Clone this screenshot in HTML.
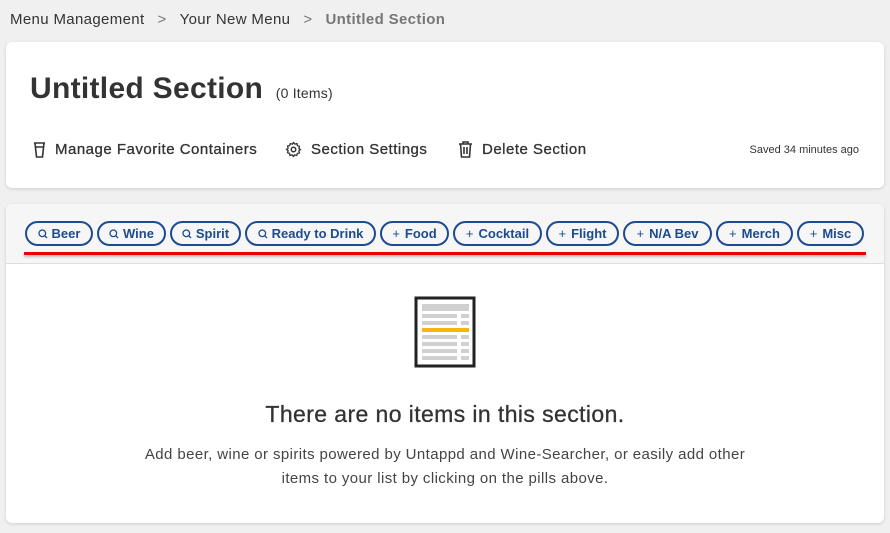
<!DOCTYPE html>
<html><head><style>
*{margin:0;padding:0;box-sizing:border-box}
body{width:890px;height:533px;background:#f0f0f0;font-family:"Liberation Sans",sans-serif;color:#333;position:relative;overflow:hidden}
.a{position:absolute}
.crumb{top:11px;left:10px;font-size:15px;color:#333;white-space:nowrap;letter-spacing:0.35px}
.crumb span.s{color:#777;margin:0 13px}
.card{background:#fff;border-radius:6px;box-shadow:0 1px 3px rgba(0,0,0,.15)}
.pill{position:absolute;top:221px;height:25px;border:2px solid #1d4b8f;border-radius:13px;color:#1d4b8f;font-size:13px;font-weight:bold;display:flex;align-items:center;justify-content:center;white-space:nowrap}
.pill svg{margin-right:4px}
.act{top:141px;font-size:15px;color:#333;display:flex;align-items:center;white-space:nowrap;letter-spacing:0.5px;-webkit-text-stroke:0.3px #333}
.act svg{margin-right:9px}
</style></head><body>
<div class="a crumb">Menu Management<span class="s">&gt;</span>Your New Menu<span class="s">&gt;</span><b style="color:#777">Untitled Section</b></div>
<div class="a card" style="left:6px;top:42px;width:878px;height:146px"></div>
<div class="a" style="left:30px;top:72px;font-size:30px;font-weight:bold;color:#333;letter-spacing:0.3px">Untitled Section <span style="font-size:14px;font-weight:normal;margin-left:4px;letter-spacing:0.2px">(0 Items)</span></div>
<div class="a act" style="left:33px"><svg width="13" height="16" viewBox="0 0 13 16"><path d="M1 1h11M2 1l1.5 14h6L11 1M2.5 5h8" fill="none" stroke="#333" stroke-width="1.6"/></svg>Manage Favorite Containers</div>
<div class="a act" style="left:285px"><svg width="17" height="17" viewBox="0 0 24 24"><circle cx="12" cy="12" r="3.2" fill="none" stroke="#333" stroke-width="2"/><path d="M12 2l2 2.5 3-1 .5 3 3 1-1 3L22 12l-2.5 2 1 3-3 .5-1 3-3-1L12 22l-2-2.5-3 1-.5-3-3-1 1-3L2 12l2.5-2-1-3 3-.5 1-3 3 1z" fill="none" stroke="#333" stroke-width="1.8" stroke-linejoin="round"/></svg>Section Settings</div>
<div class="a act" style="left:458px"><svg width="15" height="17" viewBox="0 0 15 17"><path d="M1 3h13M5 3V1h5v2M2.5 3l1 13h8l1-13M6 6v7M9 6v7" fill="none" stroke="#333" stroke-width="1.6"/></svg>Delete Section</div>
<div class="a" style="right:31px;top:144px;font-size:11px;color:#333">Saved 34 minutes ago</div>

<div class="a card" style="left:6px;top:204px;width:878px;height:319px;overflow:hidden"><div style="height:60px;background:#f6f6f6;border-bottom:1px solid #ddd"></div></div>
<div class="a" style="left:24px;top:252px;width:842px;height:3px;background:#e00;box-shadow:0 2px 2px rgba(0,0,0,.25)"></div>
<div class="pill" style="left:25px;width:68px"><svg width="10" height="10" viewBox="0 0 10 10"><circle cx="4.3" cy="4.3" r="3.3" fill="none" stroke="#1d4b8f" stroke-width="1.3"/><path d="M6.8 6.8L9 9" stroke="#1d4b8f" stroke-width="1.3"/></svg>Beer</div>
<div class="pill" style="left:97px;width:69px"><svg width="10" height="10" viewBox="0 0 10 10"><circle cx="4.3" cy="4.3" r="3.3" fill="none" stroke="#1d4b8f" stroke-width="1.3"/><path d="M6.8 6.8L9 9" stroke="#1d4b8f" stroke-width="1.3"/></svg>Wine</div>
<div class="pill" style="left:170px;width:71px"><svg width="10" height="10" viewBox="0 0 10 10"><circle cx="4.3" cy="4.3" r="3.3" fill="none" stroke="#1d4b8f" stroke-width="1.3"/><path d="M6.8 6.8L9 9" stroke="#1d4b8f" stroke-width="1.3"/></svg>Spirit</div>
<div class="pill" style="left:245px;width:131px"><svg width="10" height="10" viewBox="0 0 10 10"><circle cx="4.3" cy="4.3" r="3.3" fill="none" stroke="#1d4b8f" stroke-width="1.3"/><path d="M6.8 6.8L9 9" stroke="#1d4b8f" stroke-width="1.3"/></svg>Ready to Drink</div>
<div class="pill" style="left:380px;width:69px"><span style="font-weight:normal;margin-right:5px">+</span>Food</div>
<div class="pill" style="left:453px;width:89px"><span style="font-weight:normal;margin-right:5px">+</span>Cocktail</div>
<div class="pill" style="left:546px;width:73px"><span style="font-weight:normal;margin-right:5px">+</span>Flight</div>
<div class="pill" style="left:623px;width:89px"><span style="font-weight:normal;margin-right:5px">+</span>N/A Bev</div>
<div class="pill" style="left:716px;width:77px"><span style="font-weight:normal;margin-right:5px">+</span>Merch</div>
<div class="pill" style="left:797px;width:67px"><span style="font-weight:normal;margin-right:5px">+</span>Misc</div>

<svg class="a" style="left:414px;top:296px" width="62" height="72" viewBox="0 0 62 72">
<rect x="2" y="2" width="58" height="68" fill="#fff" stroke="#222" stroke-width="3"/>
<rect x="8" y="8" width="47" height="7" fill="#d0d0d0"/>
<g fill="#d0d0d0"><rect x="8" y="18" width="35" height="4"/><rect x="47" y="18" width="8" height="4"/><rect x="8" y="25" width="35" height="4"/><rect x="47" y="25" width="8" height="4"/>
<rect x="8" y="39" width="35" height="4"/><rect x="47" y="39" width="8" height="4"/><rect x="8" y="46" width="35" height="4"/><rect x="47" y="46" width="8" height="4"/><rect x="8" y="53" width="35" height="4"/><rect x="47" y="53" width="8" height="4"/><rect x="8" y="60" width="35" height="4"/><rect x="47" y="60" width="8" height="4"/></g>
<rect x="8" y="32" width="47" height="4" fill="#f6b512"/></svg>
<div class="a" style="left:0;width:890px;top:401px;text-align:center;font-size:23px;color:#333;letter-spacing:0.4px;-webkit-text-stroke:0.3px #333">There are no items in this section.</div>
<div class="a" style="left:0;width:890px;top:443px;text-align:center;font-size:15px;line-height:24px;color:#444;letter-spacing:0.4px">Add beer, wine or spirits powered by Untappd and Wine-Searcher, or easily add other<br>items to your list by clicking on the pills above.</div>
</body></html>
